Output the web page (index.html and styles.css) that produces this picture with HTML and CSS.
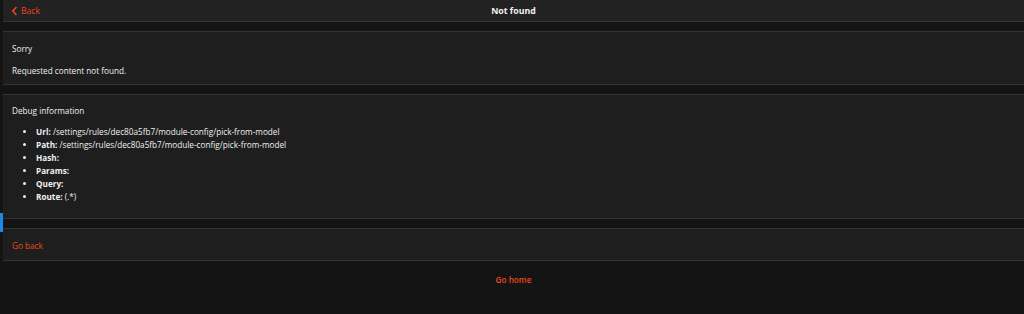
FILE: index.html
```html
<!DOCTYPE html>
<html lang="en">
<head>
  <meta charset="UTF-8">
  <title>Not found</title>
  <link rel="stylesheet" href="styles.css">
</head>
<body>
  <div class="indicator"></div>
  <div class="page">
    <header class="topbar">
      <a class="back" href="#">
        <svg width="7" height="10" viewBox="0 0 7 10"><path d="M5.5 1 L1.8 5 L5.5 9" fill="none" stroke="currentColor" stroke-width="1.6"/></svg>
        Back
      </a>
      <h1>Not found</h1>
    </header>

    <section class="card">
      <p class="title">Sorry</p>
      <p>Requested content not found.</p>
    </section>

    <section class="card debug-card">
      <p class="title">Debug information</p>
      <ul class="debug">
        <li><strong>Url:</strong> /settings/rules/dec80a5fb7/module-config/pick-from-model</li>
        <li><strong>Path:</strong> /settings/rules/dec80a5fb7/module-config/pick-from-model</li>
        <li><strong>Hash:</strong></li>
        <li><strong>Params:</strong></li>
        <li><strong>Query:</strong></li>
        <li><strong>Route:</strong> (.*)</li>
      </ul>
    </section>

    <section class="card link-card">
      <a href="#">Go back</a>
    </section>

    <div class="footer">
      <a href="#">Go home</a>
    </div>
  </div>
</body>
</html>
```

FILE: styles.css
```css
body {
  margin: 0;
  background: #141414;
  color: #f0f0f0;
  font-family: 'Open Sans', sans-serif;
  font-size: 8.2px;
  height: 314px;
  overflow: hidden;
}

a {
  color: #e8491b;
  text-decoration: none;
}

.indicator {
  position: absolute;
  left: 0;
  top: 213px;
  width: 3px;
  height: 19px;
  background: #1e88e5;
}

.page {
  margin-left: 3px;
}

.topbar {
  height: 21px;
  background: #222;
  border-bottom: 1px solid #363636;
  display: flex;
  align-items: center;
  position: relative;
}

.back {
  display: flex;
  align-items: center;
  gap: 3px;
  margin-left: 8px;
  font-size: 8.6px;
}

.topbar h1 {
  position: absolute;
  left: 0;
  right: 0;
  margin: 0;
  text-align: center;
  font-size: 8.8px;
  font-weight: bold;
  pointer-events: none;
}

.card {
  background: #1e1e1e;
  border-top: 1px solid #333;
  border-bottom: 1px solid #333;
  margin-top: 9px;
  padding: 10px 9px 7px;
}

.card p {
  margin: 0;
  line-height: 13px;
}

.card p.title {
  margin-bottom: 9px;
}

.debug-card {
  padding-top: 9px;
}

.debug-card p.title {
  margin-bottom: 8px;
}

.debug {
  margin: 0 0 8px;
  padding-left: 24px;
  list-style: disc;
}

.debug li {
  line-height: 13px;
}

.link-card {
  padding: 10px 9px 8px;
  line-height: 13px;
}

.link-card a {
  font-weight: 500;
}

.footer {
  text-align: center;
  padding-top: 12px;
  line-height: 13px;
}

.footer a {
  font-weight: 600;
}
```
